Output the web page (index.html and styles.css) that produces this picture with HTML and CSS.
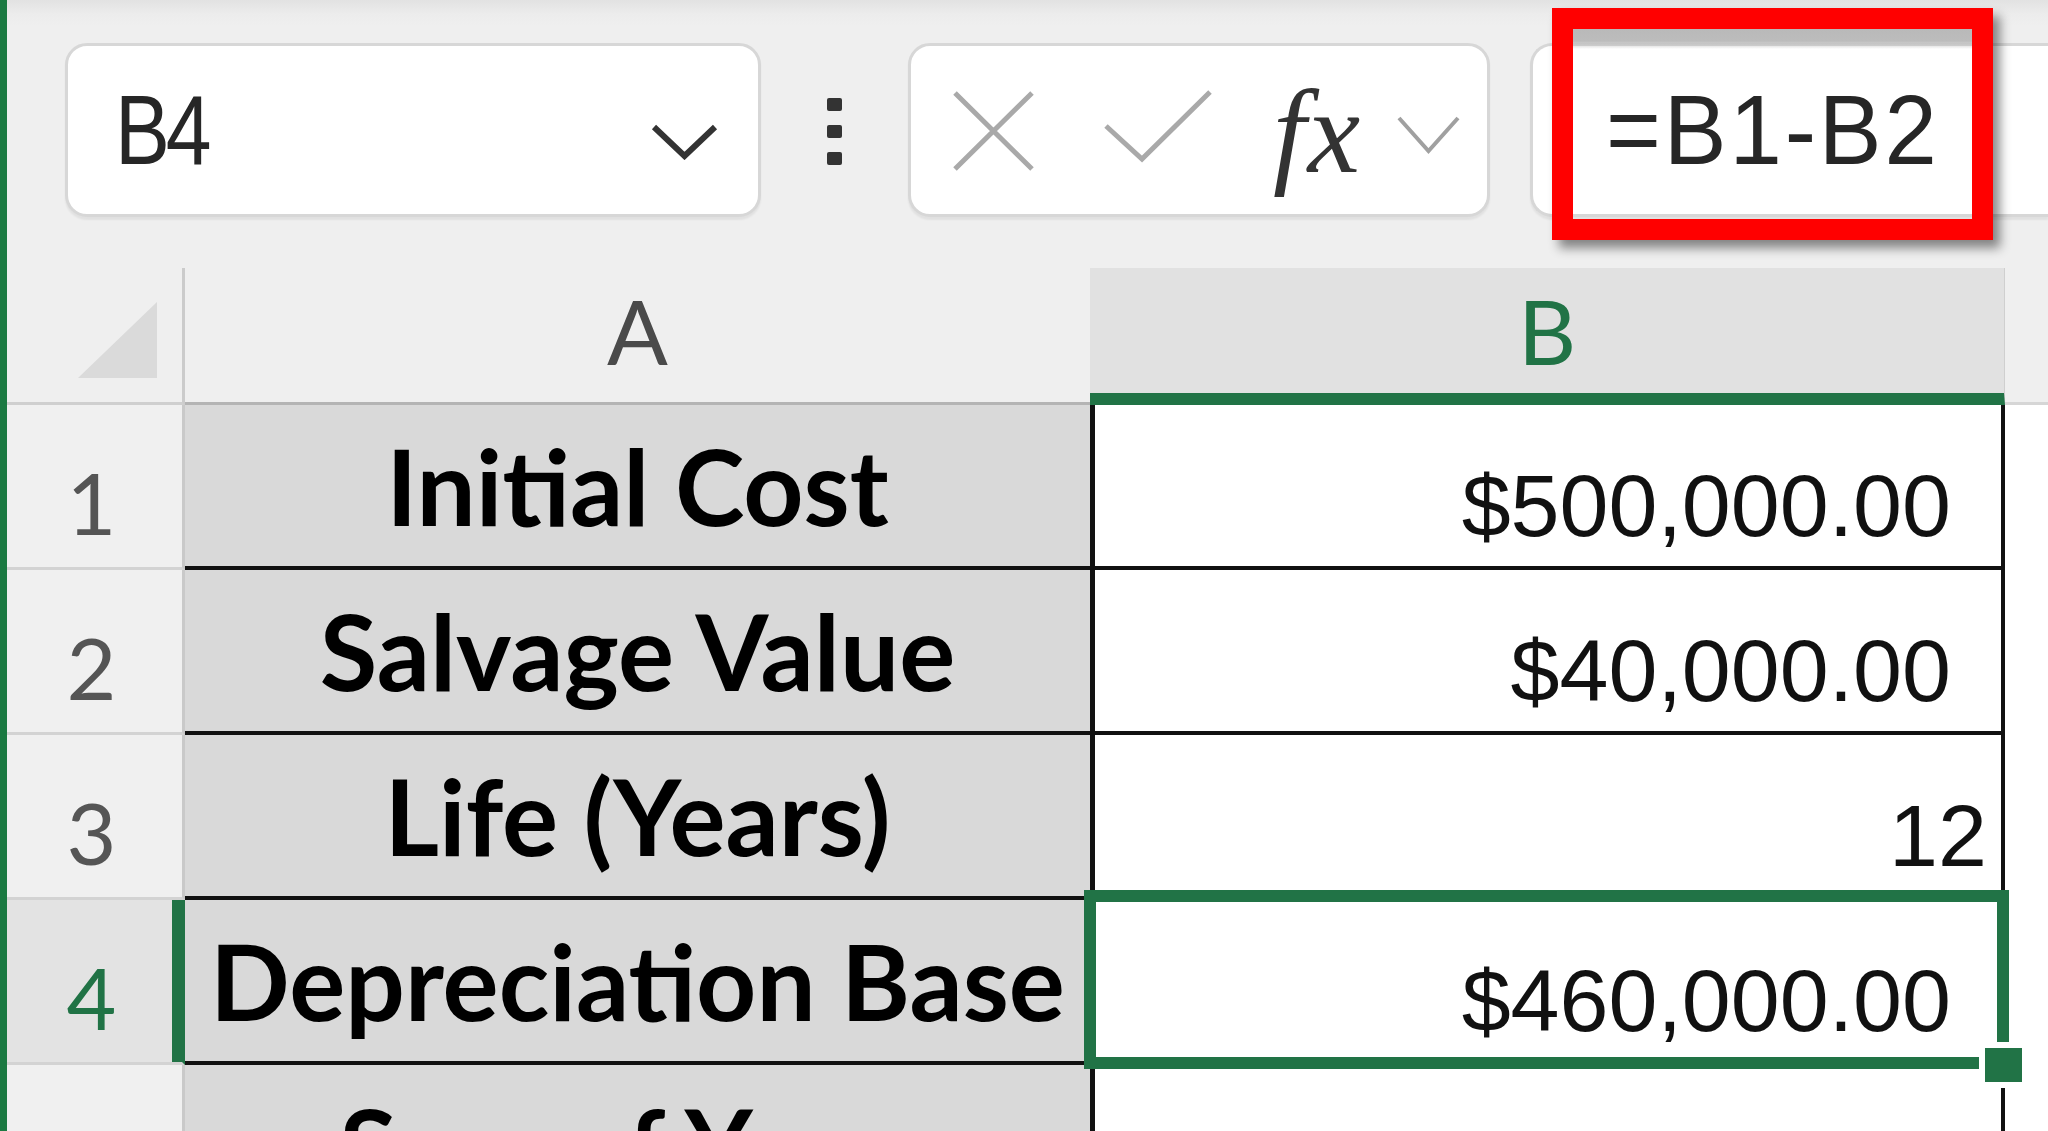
FILE: index.html
```html
<!DOCTYPE html>
<html>
<head>
<meta charset="utf-8">
<link rel="stylesheet" href="styles.css">
</head>
<body>
<div class="app">
  <div class="toolbar">
    <div class="namebox">
      <span class="nb-text">B4</span>
      <svg class="nb-chev" viewBox="0 0 69 37"><path d="M4 4 L34.5 33 L65 4" fill="none" stroke="#333" stroke-width="6"/></svg>
    </div>
    <div class="dots"><i></i><i></i><i></i></div>
    <div class="fxbox">
      <svg class="ic-x" viewBox="0 0 83 82"><path d="M3 3 L80 79 M80 3 L3 79" stroke="#a9a9a9" stroke-width="5" fill="none"/></svg>
      <svg class="ic-check" viewBox="0 0 110 74"><path d="M3 37 L39 70 L107 3" stroke="#a9a9a9" stroke-width="5" fill="none"/></svg>
      <span class="fx">fx</span>
      <svg class="fx-chev" viewBox="0 0 65 40"><path d="M3 3 L32.5 36 L62 3" fill="none" stroke="#a0a0a0" stroke-width="4"/></svg>
    </div>
    <div class="formula"><span class="f-text">=B1-B2</span></div>
  </div>

  <div class="grid">
    <div class="row hdr">
      <div class="corner"><svg viewBox="0 0 80 76" class="tri"><polygon points="0,76 79,0 79,76" fill="#dadada"/></svg></div>
      <div class="ha">A</div>
      <div class="hb">B</div>
      <div class="hc"></div>
    </div>
    <div class="row">
      <div class="rh">1</div>
      <div class="ca">Initial Cost</div>
      <div class="cb money">$500,000.00</div>
      <div class="cc"></div>
    </div>
    <div class="row">
      <div class="rh">2</div>
      <div class="ca">Salvage Value</div>
      <div class="cb money">$40,000.00</div>
      <div class="cc"></div>
    </div>
    <div class="row">
      <div class="rh">3</div>
      <div class="ca">Life (Years)</div>
      <div class="cb num">12</div>
      <div class="cc"></div>
    </div>
    <div class="row">
      <div class="rh rh-sel">4</div>
      <div class="ca">Depreciation Base</div>
      <div class="cb money sel">$460,000.00</div>
      <div class="cc"></div>
    </div>
    <div class="row">
      <div class="rh"></div>
      <div class="ca">Sum of Years</div>
      <div class="cb"></div>
      <div class="cc"></div>
    </div>
  </div>

  <div class="callout"></div>
</div>
</body>
</html>
```

FILE: styles.css
```css
* { box-sizing: border-box; }
html, body { margin: 0; padding: 0; width: 2048px; height: 1131px; overflow: hidden; background: #efefef; }
.app {
  position: relative;
  width: 2048px;
  height: 1131px;
  overflow: hidden;
  border-left: 7px solid #1b7a42;
  background: #efefef;
  font-family: "Liberation Sans", Arial, sans-serif;
}

/* toolbar */
.toolbar {
  height: 268px;
  display: flex;
  align-items: flex-start;
  padding-top: 43px;
  background: linear-gradient(#e2e2e2 0, #ececec 14px, #efefef 26px);
}
.namebox, .fxbox, .formula {
  height: 174px;
  background: #fff;
  border: 3px solid #d7d7d7;
  border-radius: 22px;
  box-shadow: 0 3px 2px rgba(0,0,0,0.06);
  display: flex;
  align-items: center;
}
.namebox { margin-left: 58px; width: 696px; padding-left: 47px; }
.nb-text { font-size: 98px; letter-spacing: -5px; color: #262626; line-height: 1; display: inline-block; transform: scaleX(0.84); transform-origin: left center; }
.nb-chev { margin-left: auto; margin-right: 39px; width: 69px; height: 37px; margin-top: 22px; }
.dots { margin-left: 66px; width: 16px; height: 174px; display: flex; flex-direction: column; justify-content: center; gap: 14px; padding-top: 2px; }
.dots i { display: block; width: 15px; height: 13px; background: #333; border-radius: 2px; }
.fxbox { margin-left: 65px; width: 582px; padding-left: 41px; }
.ic-x { width: 83px; height: 82px; margin-top: 2px; }
.ic-check { width: 110px; height: 74px; margin-left: 68px; margin-bottom: 8px; }
.fx { margin-left: 60px; font-family: "Liberation Serif", "Times New Roman", serif; font-style: italic; font-size: 118px; line-height: 1; color: #333; letter-spacing: 2px; margin-top: 6px; }
.fx-chev { width: 65px; height: 40px; margin-left: 34px; margin-top: 10px; }
.formula { margin-left: 40px; flex: 1; border-right: none; border-radius: 22px 0 0 22px; padding-left: 73px; }
.f-text { font-size: 98px; line-height: 1; color: #262626; letter-spacing: 3px; display: inline-block; transform: scaleX(0.96); transform-origin: left center; }

/* grid */
.grid { display: flex; flex-direction: column; }
.row { display: flex; height: 165px; }
.row.hdr { height: 137px; }
.corner {
  width: 178px; border-right: 3px solid #cbcbcb; border-bottom: 3px solid #cfcfcf;
  background: #efefef; position: relative; padding: 34px 0 0 71px;
}
.tri { display: block; width: 80px; height: 76px; }
.ha, .hb {
  display: flex; justify-content: center; align-items: flex-end;
  font-family: "Lato", "Liberation Sans", sans-serif; font-weight: 400;
  font-size: 90px; line-height: 1; padding-bottom: 27px;
}
.ha { width: 905px; background: #efefef; color: #4a4a4a; border-bottom: 3px solid #b4b4b4; }
.hb { width: 915px; background: #e1e1e1; color: #217346; border-bottom: 12px solid #217346; border-right: 1px solid #cfcfcf; padding-bottom: 18px; }
.hc { flex: 1; background: #efefef; border-bottom: 3px solid #d6d6d6; }

.rh {
  width: 178px; background: #f0f0f0; border-right: 3px solid #c9c9c9; border-bottom: 3px solid #d3d3d3;
  display: flex; justify-content: center; align-items: flex-end; padding-bottom: 22px; padding-right: 6px;
  font-family: "Lato", "Liberation Sans", sans-serif; font-weight: 400; font-size: 86px; line-height: 1; color: #555;
}
.rh-sel { background: #e3e3e3; border-right-color: #217346; box-shadow: inset -10px 0 0 #217346; color: #217346; }
.ca {
  width: 910px; background: #d9d9d9; border-right: 5px solid #111; border-bottom: 4px solid #111;
  display: flex; justify-content: center; align-items: center;
  font-family: "Lato", "Liberation Sans", sans-serif; font-weight: 700; font-size: 105px; line-height: 1; color: #000;
}
.cb {
  width: 910px; background: #fff; border-right: 4px solid #111; border-bottom: 4px solid #111;
  display: flex; justify-content: flex-end; align-items: flex-end;
  font-size: 88px; line-height: 1; color: #111; padding-bottom: 16px;
}
.cb.money { padding-right: 50px; }
.cb.num { padding-right: 14px; }
.cc { flex: 1; background: #fff; }

.sel { position: relative; }
.sel::before {
  content: ""; position: absolute; left: -11px; top: -10px; right: -8px; bottom: -8px;
  border: 12px solid #217346;
}
.sel::after {
  content: ""; position: absolute; left: 890px; top: 148px; width: 37px; height: 34px;
  background: #217346; box-shadow: 0 0 0 6px #fff;
}

.callout {
  position: absolute; left: 1545px; top: 8px; width: 441px; height: 232px;
  border: 21px solid #ff0000;
  background: linear-gradient(#b9b9b9 0, #bcbcbc 12px, rgba(190,190,190,0) 20px);
  box-shadow: 7px 8px 10px rgba(0,0,0,0.45);
}
```
